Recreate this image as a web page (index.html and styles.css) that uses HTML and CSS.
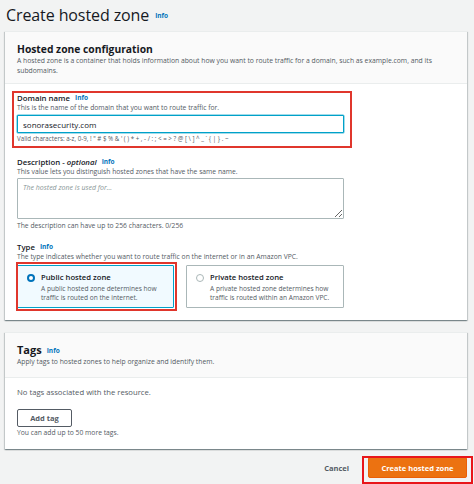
FILE: index.html
```html
<!DOCTYPE html>
<html>
<head>
<meta charset="utf-8">
<link rel="stylesheet" href="styles.css">
</head>
<body>
<div class="page">
  <div class="title-row">
    <h1>Create hosted zone</h1>
    <span class="info">Info</span>
  </div>

  <section class="card">
    <div class="card-header">
      <h2>Hosted zone configuration</h2>
      <p class="desc">A hosted zone is a container that holds information about how you want to route traffic for a domain, such as example.com, and its subdomains.</p>
    </div>
    <div class="card-body">
      <div class="field annot-field">
        <div class="label-row"><span class="label">Domain name</span><span class="info">Info</span></div>
        <div class="help">This is the name of the domain that you want to route traffic for.</div>
        <input class="control text-input" type="text" value="sonorasecurity.com">
        <div class="constraint">Valid characters: a-z, 0-9, ! " # $ % &amp; ' ( ) * + , - / : ; &lt; = &gt; ? @ [ \ ] ^ _ ` { | } . ~</div>
      </div>

      <div class="field desc-field">
        <div class="label-row"><span class="label">Description - <i>optional</i></span><span class="info">Info</span></div>
        <div class="help">This value lets you distinguish hosted zones that have the same name.</div>
        <textarea class="control textarea" placeholder="The hosted zone is used for..."></textarea>
        <div class="help count">The description can have up to 256 characters. 0/256</div>
      </div>

      <div class="field type-field">
        <div class="label-row"><span class="label">Type</span><span class="info">Info</span></div>
        <div class="help">The type indicates whether you want to route traffic on the internet or in an Amazon VPC.</div>
        <div class="tiles control">
          <div class="tile selected">
            <span class="radio on"></span>
            <div class="tile-text">
              <div class="tile-title">Public hosted zone</div>
              <div class="tile-desc">A public hosted zone determines how traffic is routed on the internet.</div>
            </div>
            <span class="annot"></span>
          </div>
          <div class="tile">
            <span class="radio"></span>
            <div class="tile-text">
              <div class="tile-title">Private hosted zone</div>
              <div class="tile-desc">A private hosted zone determines how traffic is routed within an Amazon VPC.</div>
            </div>
          </div>
        </div>
      </div>
    </div>
  </section>

  <section class="card tags-card">
    <div class="card-header tags-header">
      <div class="label-row"><h2>Tags</h2><span class="info">Info</span></div>
      <p class="desc">Apply tags to hosted zones to help organize and identify them.</p>
    </div>
    <div class="card-body tags-body">
      <div class="empty">No tags associated with the resource.</div>
      <button class="btn-normal">Add tag</button>
      <div class="help">You can add up to 50 more tags.</div>
    </div>
  </section>

  <div class="footer">
    <button class="btn-link">Cancel</button>
    <button class="btn-primary">Create hosted zone<span class="annot"></span></button>
  </div>
</div>
</body>
</html>
```

FILE: styles.css
```css
* { box-sizing: border-box; }
html, body { margin: 0; padding: 0; }
body {
  background: #f2f3f3;
  font-family: "Open Sans", "Noto Sans", sans-serif;
  color: #16191f;
  width: 474px;
  height: 484px;
  overflow: hidden;
}
.page { padding: 0 7px 0 5px; }

.title-row {
  height: 31px;
  display: flex;
  align-items: center;
  gap: 6px;
  padding-left: 1px;
  padding-bottom: 2px;
}
h1 {
  margin: 0;
  font-size: 16px;
  font-weight: 400;
  line-height: 20px;
  letter-spacing: -0.1px;
}
.info {
  color: #0073bb;
  font-weight: 700;
  font-size: 6.5px;
  line-height: 10px;
}
.title-row .info { margin-top: 3px; }

.card {
  background: #fff;
  border-top: 1px solid #eaeded;
  box-shadow: 0 1px 1px 0 rgba(0, 28, 36, 0.3), 1px 1px 1px 0 rgba(0, 28, 36, 0.15), -1px 1px 1px 0 rgba(0, 28, 36, 0.15);
}
.card-header {
  background: #fafafa;
  border-bottom: 1px solid #eaeded;
  padding: 10px 12px 7px;
}
h2 {
  margin: 0;
  font-size: 10.3px;
  font-weight: 700;
  line-height: 14px;
}
.desc {
  margin: 0;
  font-size: 6.8px;
  line-height: 10px;
  color: #545b64;
}
.card-body { padding: 7px 12px 12px; }

.control { width: 327px; }

.field { display: flex; flex-direction: column; }
.label-row { display: flex; align-items: center; gap: 5px; height: 10px; }
.label { font-size: 7.8px; font-weight: 600; line-height: 10px; }
.label i { font-weight: 600; }
.help { font-size: 6.75px; line-height: 10px; color: #545b64; }

.annot-field {
  margin-left: -5px;
  width: 340px;
  border: 2px solid #e0362c;
  padding: 0 6px 0 3px;
  height: 57px;
}
.text-input {
  margin-top: 2px;
  height: 18px;
  border: 1px solid #00a1c9;
  box-shadow: 0 0 0 0.5px #44b9d6;
  border-radius: 1px;
  padding: 0 5px;
  font-family: inherit;
  font-size: 8px;
  color: #16191f;
  outline: none;
}
.constraint {
  margin-top: 1px;
  font-size: 6.2px;
  line-height: 10px;
  color: #545b64;
}

.desc-field { margin-top: 9px; }
.textarea {
  margin-top: 1px;
  height: 41px;
  border: 1px solid #aab7b8;
  border-radius: 1px;
  padding: 4px 5px;
  font-family: inherit;
  font-size: 7px;
  resize: vertical;
  display: block;
}
.textarea::placeholder { color: #879596; font-style: italic; }
.count { margin-top: 2px; }

.type-field { margin-top: 11px; }
.tiles {
  margin-top: 3px;
  display: grid;
  grid-template-columns: 157px 158px;
  gap: 12px;
}
.tile {
  position: relative;
  height: 43px;
  border: 1px solid #aab7b8;
  border-radius: 1px;
  display: flex;
  gap: 6px;
  padding: 6px 8px 0 9px;
  background: #fff;
}
.tile.selected { background: #f1faff; border-color: #00a1c9; }
.radio {
  flex: none;
  width: 8px;
  height: 8px;
  margin-top: 2px;
  border-radius: 50%;
  border: 1px solid #aab7b8;
  background: #fff;
}
.radio.on { border: 2.3px solid #0073bb; }
.tile-title { font-size: 7.7px; font-weight: 600; line-height: 11px; }
.tile-desc { font-size: 6.6px; line-height: 9px; color: #545b64; margin-top: 1px; }
.annot {
  position: absolute;
  left: -2px;
  top: -4px;
  right: -4px;
  bottom: -4px;
  border: 2px solid #e0362c;
  pointer-events: none;
}

.tags-card { margin-top: 12px; }
.tags-header { padding: 10px 12px 10px; }
.tags-header .label-row { height: 14px; }
.tags-header h2 { font-size: 11px; }
.tags-header .info { margin-top: 2px; }
.tags-body { padding: 8px 12px 11px; }
.empty { font-size: 7.7px; line-height: 12px; color: #545b64; }
.btn-normal {
  display: block;
  margin-top: 11px;
  width: 55px;
  height: 18px;
  border: 1px solid #545b64;
  border-radius: 2px;
  background: #fff;
  color: #545b64;
  font-family: inherit;
  font-size: 7.5px;
  font-weight: 700;
  padding: 0;
}
.tags-body .help { margin-top: 1px; }

.footer {
  margin-top: 8px;
  display: flex;
  justify-content: flex-end;
  align-items: center;
  gap: 19px;
}
.btn-link {
  border: none;
  background: none;
  padding: 0;
  font-family: inherit;
  font-size: 7.5px;
  font-weight: 700;
  color: #545b64;
}
.btn-primary {
  position: relative;
  width: 99px;
  height: 21px;
  border: 1px solid #eb5f07;
  border-radius: 2px;
  background: #ec7211;
  color: #fff;
  font-family: inherit;
  font-size: 7.5px;
  font-weight: 700;
  padding: 0;
}
.btn-primary .annot {
  left: -7px;
  right: -7px;
  top: -2px;
  bottom: -7px;
  border-color: #e8161b;
}
```
